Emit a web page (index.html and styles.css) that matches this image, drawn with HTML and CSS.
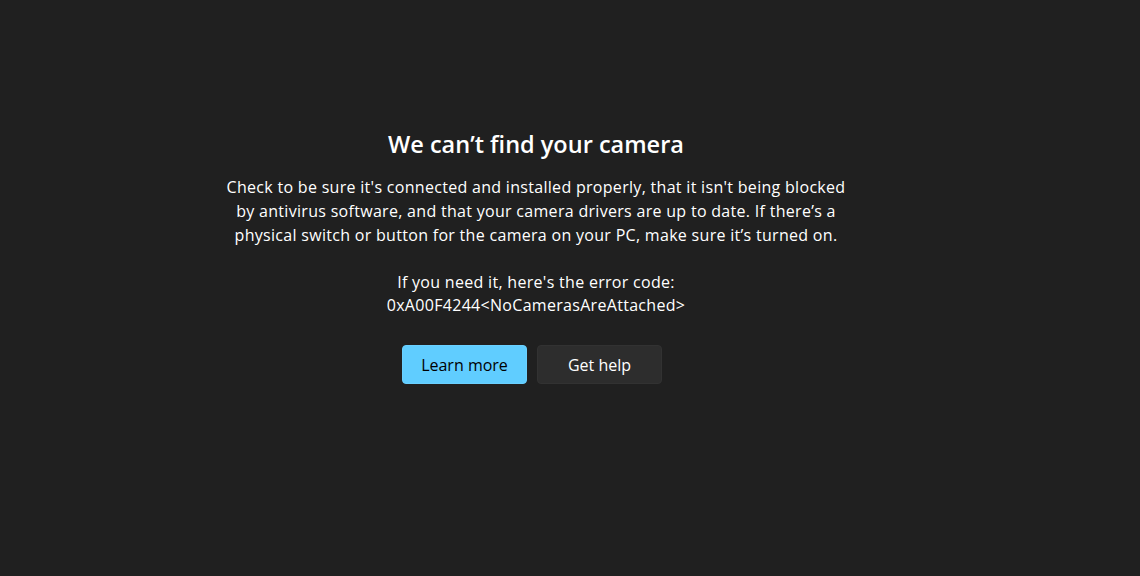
FILE: index.html
```html
<!DOCTYPE html>
<html lang="en">
<head>
<meta charset="utf-8">
<link rel="stylesheet" href="styles.css">
<title>Camera</title>
</head>
<body>
<div class="app">
  <main class="main">
    <h1 class="title">We can’t find your camera</h1>
    <p class="desc">Check to be sure it's connected and installed properly, that it isn't being blocked<br>by antivirus software, and that your camera drivers are up to date. If there’s a<br>physical switch or button for the camera on your PC, make sure it’s turned on.</p>
    <p class="desc code">If you need it, here's the error code:<br>0xA00F4244&lt;NoCamerasAreAttached&gt;</p>
    <div class="actions">
      <button class="btn primary">Learn more</button>
      <button class="btn secondary">Get help</button>
    </div>
  </main>
  <aside class="rail"></aside>
</div>
</body>
</html>
```
FILE: styles.css
```css
html, body {
  margin: 0;
  padding: 0;
  background: #202020;
  height: 100%;
}
body {
  font-family: "Open Sans", "Noto Sans", sans-serif;
  color: #ffffff;
}
.app {
  display: flex;
  height: 576px;
}
.main {
  flex: 1;
  display: flex;
  flex-direction: column;
  align-items: center;
  padding-top: 128px;
}
.rail {
  width: 68px;
}
.title {
  margin: 0;
  font-size: 23.5px;
  line-height: 32px;
  font-weight: 600;
}
.desc {
  margin: 15px 0 0;
  font-size: 16px;
  line-height: 24px;
  text-align: center;
  letter-spacing: 0.3px;
}
.code {
  margin-top: 24px;
  line-height: 23px;
}
.actions {
  display: flex;
  gap: 10px;
  margin-top: 28px;
  margin-left: -8px;
}
.btn {
  width: 125px;
  height: 39px;
  border-radius: 4px;
  font-family: inherit;
  font-size: 16px;
  border: 1px solid transparent;
  cursor: pointer;
}
.primary {
  background: #60cdff;
  color: #000000;
  border-color: #6ad0ff;
}
.secondary {
  background: #2d2d2d;
  color: #ffffff;
  border-color: #323232;
}
```
